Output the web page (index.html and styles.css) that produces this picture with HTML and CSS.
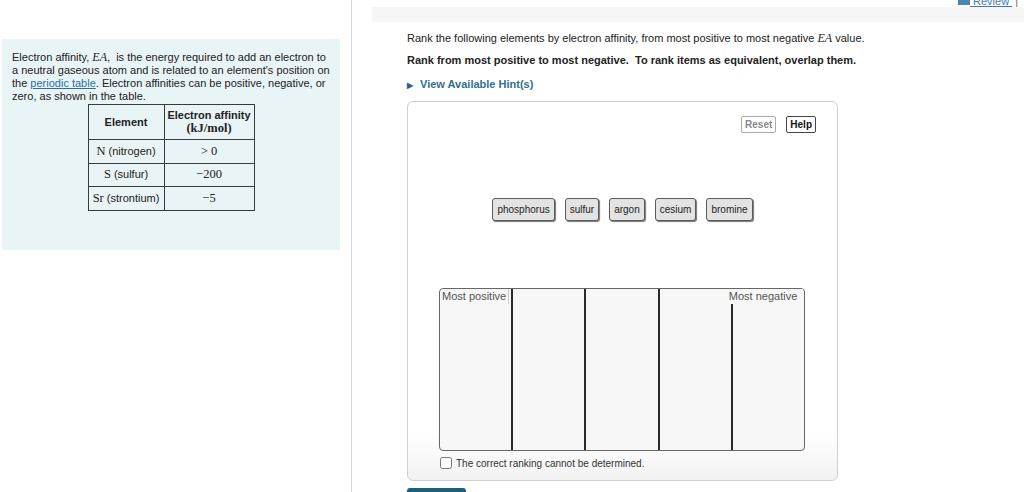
FILE: index.html
```html
<!DOCTYPE html>
<html lang="en">
<head>
    <meta charset="UTF-8">
    <title>Electron affinity ranking</title>
    <link rel="stylesheet" href="styles.css">
</head>
<body>
    <div class="page">
        <aside class="intro-col">
            <div class="intro">
                <p>Electron affinity, <span class="math">EA</span>,&nbsp; is the energy required to add an electron to<br>a neutral gaseous atom and is related to an element's position on<br>the <a href="#">periodic table</a>. Electron affinities can be positive, negative, or<br>zero, as shown in the table.</p>
                <table class="ea-table">
                    <colgroup>
                        <col class="col-el">
                        <col class="col-ea">
                    </colgroup>
                    <tr>
                        <th>Element</th>
                        <th>Electron affinity<br><span class="num">(kJ/mol)</span></th>
                    </tr>
                    <tr>
                        <td><span class="num">N</span> (nitrogen)</td>
                        <td class="num">&gt; 0</td>
                    </tr>
                    <tr>
                        <td><span class="num">S</span> (sulfur)</td>
                        <td class="num">&minus;200</td>
                    </tr>
                    <tr>
                        <td><span class="num">Sr</span> (strontium)</td>
                        <td class="num">&minus;5</td>
                    </tr>
                </table>
            </div>
        </aside>
        <main class="question-col">
            <div class="top-links">
                <a href="#" class="review">
                    <svg width="12" height="9" viewBox="0 0 12 9"><rect x="0" y="0" width="12" height="9" fill="#4a86b0"/></svg>
                    Review
                </a>
                <span class="sep">|</span>
            </div>
            <div class="graybar"></div>
            <div class="question">
                <p class="prompt">Rank the following elements by electron affinity, from most positive to most negative <span class="math">EA</span> value.</p>
                <p class="instr">Rank from most positive to most negative.&nbsp; To rank items as equivalent, overlap them.</p>
                <a href="#" class="hints"><span class="tri">&#9654;</span> View Available Hint(s)</a>
                <div class="rank-box">
                    <div class="tools">
                        <button class="tool reset">Reset</button>
                        <button class="tool help">Help</button>
                    </div>
                    <div class="chips">
                        <span class="chip">phosphorus</span>
                        <span class="chip">sulfur</span>
                        <span class="chip">argon</span>
                        <span class="chip">cesium</span>
                        <span class="chip">bromine</span>
                    </div>
                    <div class="slots">
                        <div class="slot"><span class="slot-label first">Most positive</span></div>
                        <div class="slot"></div>
                        <div class="slot"></div>
                        <div class="slot"></div>
                        <div class="slot"><span class="slot-label last">Most negative</span></div>
                    </div>
                    <label class="cant">
                        <input type="checkbox"> The correct ranking cannot be determined.
                    </label>
                </div>
                <button class="submit">Submit</button>
            </div>
        </main>
    </div>
</body>
</html>
```

FILE: styles.css
```css
body {
    margin: 0;
    font-family: "Liberation Sans", Arial, sans-serif;
    font-size: 11px;
    color: #222;
    background-color: #fff;
    overflow: hidden;
}
.page {
    display: flex;
    height: 492px;
}
.intro-col {
    width: 352px;
    border-right: 1px solid #d3d9e2;
    padding-top: 39px;
    box-sizing: border-box;
}
.intro {
    margin-left: 2px;
    width: 338px;
    height: 211px;
    box-sizing: border-box;
    padding: 12px 10px 0 10px;
    background-color: #e8f4f6;
}
.intro p {
    margin: 0;
    line-height: 13px;
    white-space: nowrap;
}
.intro a {
    color: #2e6e9e;
    text-decoration: underline;
}
.math {
    font-family: "Liberation Serif", "Times New Roman", serif;
    font-style: italic;
    font-size: 12px;
    line-height: 11px;
}
.num {
    font-family: "Liberation Serif", "Times New Roman", serif;
    font-size: 12.5px;
}
.ea-table {
    border-collapse: collapse;
    table-layout: fixed;
    width: 166px;
    margin: 1px auto 0;
}
.col-el {
    width: 76px;
}
.col-ea {
    width: 90px;
}
.ea-table th,
.ea-table td {
    border: 1px solid #3a3a3a;
    padding: 0 1px;
    text-align: center;
    font-size: 11px;
    white-space: nowrap;
}
.ea-table th {
    height: 34px;
    line-height: 13px;
}
.ea-table td {
    height: 22.5px;
}
.ea-table td.num {
    font-size: 12.5px;
}
.question-col {
    flex: 1;
    position: relative;
}
.top-links {
    height: 7px;
    overflow: hidden;
    text-align: right;
    padding-right: 6px;
    line-height: 7px;
}
.review {
    color: #3b7bb0;
    font-size: 11px;
    text-decoration: underline;
    position: relative;
    top: -4px;
}
.sep {
    position: relative;
    top: -4px;
    color: #666;
    margin-left: 3px;
}
.graybar {
    margin-left: 20px;
    height: 15px;
    background-color: #f6f6f6;
}
.question {
    padding-left: 55px;
}
.prompt {
    margin: 9px 0 0 0;
    line-height: 14px;
}
.instr {
    margin: 8px 0 0 0;
    font-weight: bold;
    line-height: 14px;
}
.hints {
    display: inline-block;
    margin: 10px 0 0 0;
    color: #2f6f8f;
    font-weight: bold;
    text-decoration: none;
    line-height: 14px;
}
.tri {
    font-size: 8px;
    margin-right: 4px;
    color: #2f5f7a;
}
.rank-box {
    margin-top: 8px;
    width: 431px;
    height: 380px;
    box-sizing: border-box;
    border: 1px solid #cfcfcf;
    border-radius: 6px;
    padding: 14px 21px 0 31px;
    background: linear-gradient(to bottom, #fff 88%, #f2f2f2 100%);
}
.tools {
    display: flex;
    justify-content: flex-end;
    gap: 10px;
}
.tool {
    height: 17px;
    padding: 0 3px;
    font-family: "Liberation Sans", Arial, sans-serif;
    font-size: 10px;
    font-weight: bold;
    background-color: #fff;
    border-radius: 2px;
    cursor: pointer;
}
.reset {
    color: #888;
    border: 1px solid #aaa;
}
.help {
    color: #111;
    border: 1px solid #444;
}
.chips {
    display: flex;
    justify-content: center;
    gap: 10px;
    margin-top: 65px;
    margin-right: 10px;
}
.chip {
    height: 21px;
    line-height: 21px;
    padding: 0 4px;
    font-size: 10px;
    color: #222;
    background-color: #e3e3e3;
    border: 1px solid #5a5a5a;
    border-radius: 3px;
    box-shadow: 1px 1px 1px #777;
}
.slots {
    display: flex;
    margin-top: 67px;
    width: 366px;
    height: 163px;
    box-sizing: border-box;
    border: 1px solid #666;
    border-radius: 4px;
    background-color: #f7f7f7;
}
.slot {
    flex: 1;
    position: relative;
    border-left: 2px solid #2a2a2a;
}
.slot:first-child {
    border-left: none;
}
.slot-label {
    position: absolute;
    top: 0;
    font-size: 11px;
    color: #555;
    line-height: 15px;
    background-color: #f7f7f7;
    z-index: 1;
}
.slot-label.first {
    left: 2px;
    padding-right: 2px;
    border-right: 1px solid #ccc;
}
.slot-label.last {
    left: -4px;
    right: 1px;
}
.cant {
    display: flex;
    align-items: center;
    gap: 4px;
    margin-top: 6px;
    font-size: 10px;
    color: #333;
}
.cant input {
    margin: 0 0 0 1px;
    width: 12px;
    height: 12px;
}
.submit {
    margin-top: 7px;
    width: 59px;
    height: 24px;
    border: none;
    border-radius: 3px;
    background-color: #1f5f7e;
    color: #fff;
}
```
